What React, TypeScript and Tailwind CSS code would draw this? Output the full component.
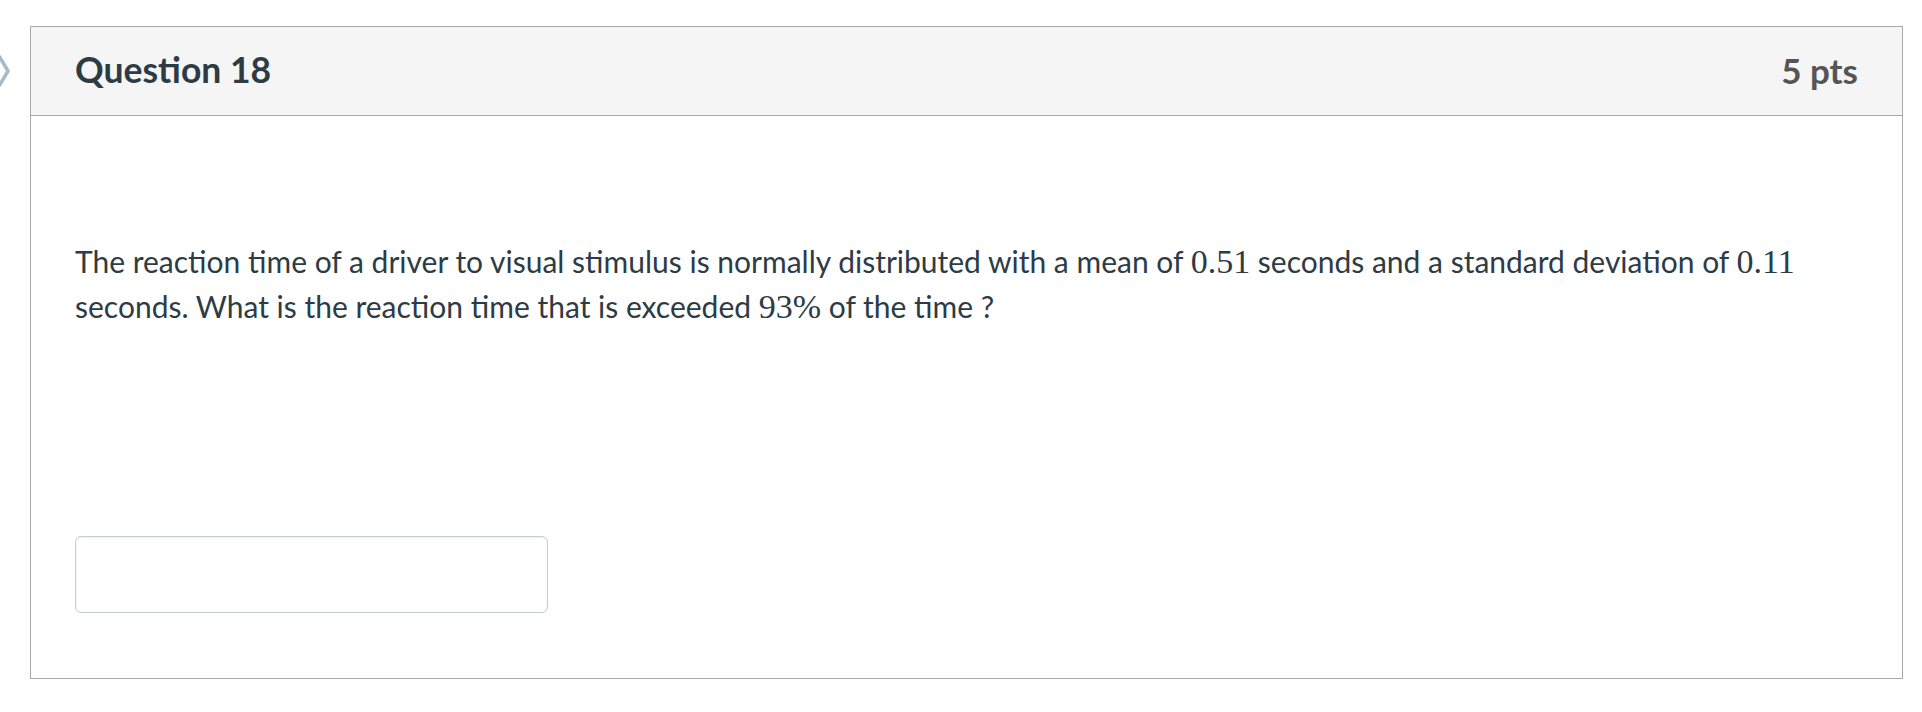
export default function App() {
  return (
    <div className="flex min-h-[712px] bg-white pt-[26px] font-['Lato','Noto_Sans',sans-serif] text-[#2d3b45]">
      <div className="flex w-[30px] shrink-0 items-start pt-[28px]">
        <svg width="12" height="36" viewBox="0 0 12 36" className="-ml-[2px]">
          <polyline
            points="1,2 10,17 1,32"
            fill="none"
            stroke="#a8b9c7"
            strokeWidth="3.5"
            strokeLinejoin="round"
          />
        </svg>
      </div>
      <div className="h-[653px] w-[1873px] border border-[#a9a9a9]">
        <div className="flex h-[89px] items-center justify-between border-b border-[#a9a9a9] bg-[#f5f5f5] px-[44px] pb-[2px]">
          <h2 className="text-[35.5px] font-bold">Question 18</h2>
          <span className="text-[35px] font-bold text-[#555]">5 pts</span>
        </div>
        <div className="px-[44px] pt-[123px]">
          <p className="text-[30px] leading-[45px]">
            The reaction time of a driver to visual stimulus is normally distributed with a mean of{" "}
            <span className="font-['Liberation_Serif',serif] text-[34px]">0.51</span> seconds and a standard
            deviation of <span className="font-['Liberation_Serif',serif] text-[34px]">0.11</span> seconds.
            What is the reaction time that is exceeded{" "}
            <span className="font-['Liberation_Serif',serif] text-[34px]">93%</span> of the time ?
          </p>
          <input
            type="text"
            className="mt-[207px] h-[77px] w-[473px] rounded-[6px] border border-[#c7cdd1] bg-white shadow-[inset_0_1px_2px_rgba(0,0,0,0.08)] outline-none"
          />
        </div>
      </div>
    </div>
  );
}
